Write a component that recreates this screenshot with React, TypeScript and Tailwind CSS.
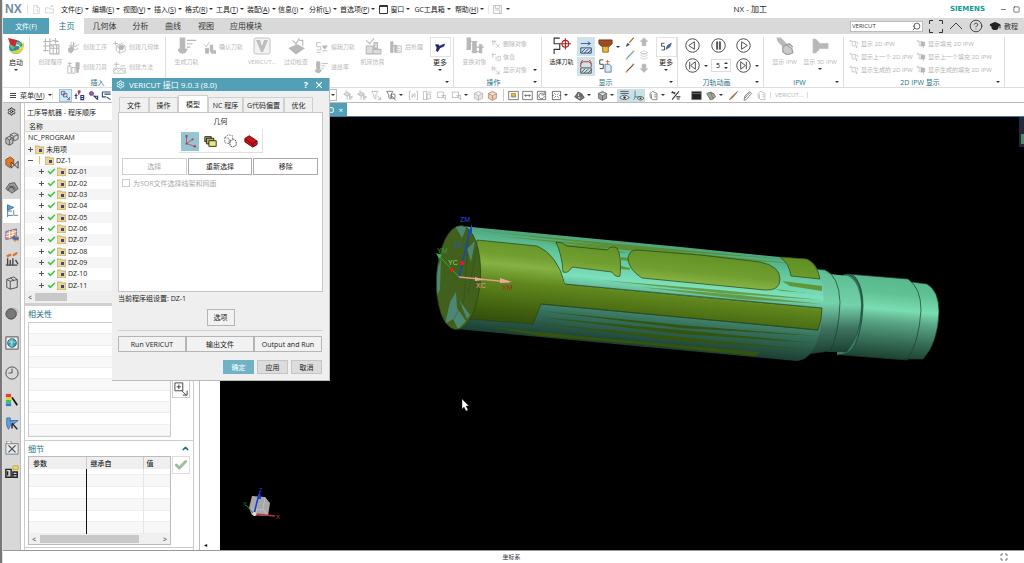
import React from 'react';
import { clsx } from 'clsx';
import { Settings, Search, Maximize, ChevronUp, CircleHelp, GraduationCap, Minus, Square, Check } from 'lucide-react';

type IconName = keyof typeof shapes;

const shapes = {
  grid: (
    <>
      <path d="M1 4h8M1 8h8M1 12h5M3 1v12M7 1v6" />
      <path d="M7 7h8v8H7zM7 10h8M10 7v8M13 7v8M12 1v5M9 3l6 1" />
    </>
  ),
  mill: (
    <>
      <path d="M5 1v8M8 1v8M11 2l-7 7M2 6h8" />
      <path d="M2 9l4-2 3 3-4 5-3-2zM9 7l6-3M10 11l4-2" fill="currentColor" />
    </>
  ),
  tools: (
    <>
      <path d="M1 6h4v9H1zM6 8h4v7H6zM3 1v6M1 3h5" />
      <path d="M11 2h4v8h-4zM12 10h2v4h-2z" fill="currentColor" />
    </>
  ),
  block: (
    <>
      <path d="M4 6l7-3 4 3v6l-7 3-4-3zM4 6l4 3 7-3M8 9v6M3 0v5M0 3h6" />
      <circle cx="10" cy="8" r="3" fill="currentColor" />
    </>
  ),
  method: <path d="M1 9h14v6H1zM1 12l3-2 3 3 3-3 5 4M4 1v7M1 4h7M9 6h6" />,
  drill: (
    <>
      <path d="M2 1h4v9H2zM0 11h8l-2 3H2z" fill="currentColor" />
      <path d="M8 3h8M8 6h5M8 9h3M4 10v5" />
    </>
  ),
  verify: (
    <>
      <path d="M1 4l3 3 4-6" />
      <path d="M3 9h4v6H3zM9 5h3v8H9zM12 12h4v3h-6z" fill="currentColor" />
    </>
  ),
  gouge: (
    <>
      <path d="M2 10l7-3 6 3-7 5z" fill="currentColor" />
      <path d="M5 3l3 3 3-5M8 6v6M11 3h3v5" />
    </>
  ),
  machine: (
    <>
      <path d="M2 3l3 3 4-5" />
      <path d="M2 8h6v7H2zM9 5h3v5H9zM8 11h7v4H8z" fill="#ddd" />
    </>
  ),
  path: (
    <>
      <path d="M7 2H2v5h5v4H2M2 14h5" />
      <path d="M9 6h6l-3 4zM9 12h6" fill="currentColor" />
    </>
  ),
  post: (
    <>
      <path d="M2 1h3v13H2zM7 5h2v9H7z" fill="currentColor" />
      <path d="M10 6h5v8h-5zM11 9h3M11 12h3M4 6h6" />
    </>
  ),
  more: (
    <path d="M2 5h4l1 2 7-3-1 3-5 2-3 5-2-1 1-4z" fill="#25286d" stroke="#25286d" />
  ),
  morePath: (
    <>
      <path d="M6 3H2v4h4v5H2" stroke="#222" />
      <path d="M8 11l2-5 5-3-2 5z" fill="#4364bd" stroke="#3949a0" />
    </>
  ),
  transform: (
    <>
      <path d="M1 1h3v10H1zM6 4h3v10H6zM12 7h2v7h-2z" fill="currentColor" />
      <path d="M3 4h7M7 9h9M5 13h8" />
    </>
  ),
  cut: <path d="M3 1v9M6 2v6M1 4h7M8 8l6 6M14 8l-6 6" />,
  info: <path d="M3 1v9M1 4h7M8 7v7M11 7h4v7h-4z" />,
  show: <path d="M2 2v7M5 3v6M6 7l7 7M13 9v5H8M1 5h8" />,
  select: (
    <>
      <path d="M6 1H1v5h5v5H1v4" stroke="#333" />
      <circle cx="11" cy="6" r="3" stroke="#a22" />
      <path d="M11 1v10M6 6h10" stroke="#a22" />
    </>
  ),
  hatch: (
    <>
      <path d="M2 9h12v6H2zM3 14l4-4M6 15l5-5M10 15l4-4" stroke="#223a70" />
      <path d="M2 4h11M10 2l3 2-3 2" stroke="#264eb1" />
    </>
  ),
  hatchArc: (
    <>
      <path d="M2 9h12v6H2zM3 14l4-4M6 15l5-5M10 15l4-4" stroke="#444" />
      <path d="M2 8V4l3-2h6l3 2v4M4 0L2 4M12 0l2 4" stroke="#b3272c" />
    </>
  ),
  holder: (
    <>
      <path d="M1 1h14v4l-3 3H4L1 5z" fill="#9c4c25" stroke="#713513" />
      <path d="M5 8h6v6H5z" fill="#edb83a" stroke="#8c6a26" />
    </>
  ),
  report: (
    <>
      <path d="M6 1H2v5h4v5H2" stroke="#333" />
      <path d="M8 6h5l2 2v7H8z" fill="#dceaf5" stroke="#557dae" />
      <path d="M9 3h4M11 1v5" stroke="#d35b2a" />
    </>
  ),
  brush: (
    <>
      <path d="M14 1L7 9" stroke="#a2662e" strokeWidth="2" />
      <path d="M2 15l2-5 3 2z" fill="#555" stroke="#444" />
    </>
  ),
  line: (
    <>
      <path d="M3 13L13 3" stroke="#4fa0b5" strokeWidth="2" />
      <path d="M1 14h3M12 2h3" stroke="#e79a2e" strokeWidth="2" />
    </>
  ),
  lineDark: (
    <>
      <path d="M3 13L13 3" stroke="#665544" strokeWidth="2" />
      <path d="M1 14h3M12 2h3" stroke="#e07b2e" strokeWidth="2" />
    </>
  ),
  up: <path d="M8 1l6 6h-3v7H5V7H2z" fill="currentColor" />,
  down: <path d="M8 15l6-6h-3V2H5v7H2z" fill="currentColor" />,
  stack: <path d="M2 4l6-3 6 3-6 3zM2 8l6 3 6-3M2 12l6 3 6-3M3 6h10" />,
  ipw: (
    <>
      <path d="M1 1l3 0 6 6-2 3-6-6z" fill="currentColor" />
      <path d="M6 9l3-2 5 3 1 4-5 2-4-3zM9 7l3-1 3 3" fill="#c9c9c9" stroke="#999" />
    </>
  ),
  ipw3d: <path d="M2 2h2l3 3v6l-3 3H2zM7 6h8v4H7z" fill="currentColor" />,
  flag: <path d="M1 3h3M3 1v4M5 4h5v7H5zM10 5h4v4M12 10v4M10 12l2 2 2-2" />,
  flagFill: (
    <>
      <path d="M1 3h3M3 1v4M5 4h5v7H5zM12 11v4" />
      <path d="M8 5h6v6H8z" fill="currentColor" />
    </>
  ),
  nav: (
    <>
      <path d="M2 2h5v5H2z" fill="#d4d9ee" stroke="#3e4784" />
      <path d="M5 5h5v5H5zM9 9l5 5M14 10v4h-4" stroke="#3e4784" />
    </>
  ),
  navTool: (
    <>
      <path d="M3 5v8M1 8h4M7 2v5M10 8h4v6h-4zM10 11h4" stroke="#29357e" strokeWidth="1.600" />
      <path d="M6 1h3v3H6z" fill="#d33" stroke="#b33" />
    </>
  ),
  navGeo: (
    <>
      <circle cx="5" cy="5" r="3" fill="#8a5acc" stroke="#7d3f3f" />
      <path d="M8 8l6 6M10 9h4v5" stroke="#29357e" strokeWidth="1.600" />
    </>
  ),
  navMethod: <path d="M2 3h12M2 3v7h5M5 6h9M8 10l6 4" stroke="#244b79" strokeWidth="1.600" />,
  cube: <path d="M2 5l6-3 6 3v7l-6 3-6-3zM2 5l6 3 6-3M8 8v7" fill="#9e9e9e" stroke="#555" />,
  cubePale: <path d="M2 5l6-3 6 3v7l-6 3-6-3zM2 5l6 3 6-3M8 8v7" fill="#e6e6e6" />,
  cubeOrange: (
    <path d="M2 5l6-3 6 3v7l-6 3-6-3zM2 5l6 3 6-3M8 8v7" fill="#f2c5a5" stroke="#a0806c" />
  ),
  filter: <path d="M1 2h9l-3 5v6l-3-2V7zM9 8l5 6M14 10v4h-4" />,
  filterDark: (
    <path d="M1 2h9l-3 5v6l-3-2V7zM8 6h5v6H8zM9 9l5 6" stroke="#555" />
  ),
  bracket: <path d="M4 2H2v12h2M12 2h2v12h-2M6 5v6l4-6v6" />,
  boxes: <path d="M2 2h5v12H2zM7 6h5v7H7zM9 3h5" />,
  lasso: <path d="M2 3h9v8H2zM8 8h6v6M9 9l5 5" />,
  snap: <path d="M1 6l5-3 5 3-5 3zM6 9v5M9 8l5 2-4 4zM3 2l3-1" fill="#ddd" />,
  window: (
    <>
      <path d="M1 2h14v12H1zM4 10h8" stroke="#444" />
      <path d="M5 5h6v4H5z" fill="#f3c642" stroke="#86702d" />
    </>
  ),
  fitWidth: <path d="M1 2h14v12H1zM4 8h8M6 6L4 8l2 2M10 6l2 2-2 2" stroke="#444" />,
  rotate: <path d="M2 2h12v12H2zM11 6a4 4 0 1 0 1 3M12 3v4H8" stroke="#444" />,
  fit: <path d="M2 2h12v12H2zM5 5l2 2M11 5L9 7M5 11l2-2M11 11L9 9M2 8h2M12 8h2" stroke="#333" />,
  shade: (
    <path d="M1 10l5-7 5 2 4 6-6 4zM6 3l-1 7 4 5M5 10l6-2" fill="#777" stroke="#444" />
  ),
  eye: (
    <>
      <path d="M2 2h12M2 5h12" stroke="#222" />
      <path d="M1 11q7-7 14 0-7 6-14 0" fill="#fff" stroke="#222" />
      <circle cx="8" cy="11" r="2" fill="#222" />
    </>
  ),
  csysEye: (
    <>
      <path d="M3 1v9h9M3 10l-2 4" stroke="#295a7c" />
      <path d="M6 12q5-5 10 0-5 5-10 0" fill="#fff" stroke="#222" />
      <circle cx="11" cy="12" r="1.500" fill="#222" />
    </>
  ),
  bag: <path d="M3 5l4-3 6 3v9H7l-4-3zM5 6v6M9 7h3M9 10h3" stroke="#555" />,
  bagPale: <path d="M3 5l4-3 6 3v9H7l-4-3zM5 6v6M9 7h3M9 10h3" />,
  percent: <path d="M13 2L3 14M2 4h6M3 2l4 4M9 10h6M10 13h4" stroke="#333" strokeWidth="1.600" />,
  film: <path d="M1 2h14v12H1zM2 5h12" fill="#222" stroke="#888" />,
  part: (
    <>
      <path d="M1 5l6-2 5 3-1 7-5 1z" fill="#8caf8c" stroke="#555" />
      <path d="M7 4l5 2 2 4-4 2z" fill="#d88f90" stroke="#766" />
    </>
  ),
  pen: <path d="M14 2L6 9l-4 5 5-3z" fill="#bb8b48" stroke="#775b36" />,
  clip: <path d="M4 12l8-9 2 2-8 9-3 1 1-6 7-7" stroke="#555" />,
  gearPart: (
    <>
      <path d="M1 10l4-6 6-1 4 7-7 5z" fill="#999" stroke="#555" />
      <path d="M3 12q4-8 9-2M5 7q5 1 6 5" stroke="#444" />
    </>
  ),
  assembly: (
    <>
      <path d="M6 3l5-2 4 2v5l-4 2-5-2zM6 3l4 2 5-2M10 5v5" fill="#d5d5d5" stroke="#555" />
      <path d="M1 7l4-2 4 2v6l-4 2-4-2zM1 7l4 2 4-2M5 9v6" fill="#bdbdbd" stroke="#555" />
    </>
  ),
  constraint: (
    <>
      <path d="M1 4l5-3 4 3v6l-5 3-4-3z" fill="#e0792a" stroke="#874b25" />
      <path d="M7 7l8 7V6l-8 8z" fill="#ccc" stroke="#333" />
    </>
  ),
  opNav: (
    <>
      <path d="M3 1v14M3 8h5M3 13h6M3 4h5" stroke="#3b70a8" />
      <path d="M3 1l7 3-7 3z" fill="#63a3d8" stroke="#346da6" />
      <path d="M10 7v6h5" stroke="#777" />
    </>
  ),
  mtool: (
    <>
      <path d="M1 4l12-3v10L1 13z" fill="#d8a083" stroke="#7e5d83" />
      <path d="M1 7l12-3M1 10l12-3M5 3v9M9 2v9" stroke="#fff" />
      <path d="M7 11l5-4v3h4v4h-4v2z" fill="#3e68c3" stroke="#f1a531" />
    </>
  ),
  robots: (
    <>
      <path d="M1 15h13M3 7v8M6 9v6M9 7v8M12 9l3 5" stroke="#444" strokeWidth="1.600" />
      <path d="M2 5l5-2M9 4l5-3" stroke="#df6e32" strokeWidth="2.500" />
    </>
  ),
  books: <path d="M2 4l4 2v9l-4-2zM6 6l8-2v9l-8 2M2 4l8-3 4 3M6 2l4 3" stroke="#444" />,
  sphere: (
    <>
      <circle cx="7" cy="9" r="6" fill="#777" stroke="#444" />
      <path d="M10 2q4 1 5 6" stroke="#aaa" />
    </>
  ),
  globe: (
    <>
      <path d="M1 1h14v14H1z" fill="#eee" stroke="#444" />
      <circle cx="8" cy="8" r="5" fill="#399eb0" stroke="#29667d" />
      <path d="M4 7h8M8 3v10M5 4q5 4 0 8" stroke="#b4e1df" />
    </>
  ),
  clock: (
    <>
      <circle cx="8" cy="8" r="7" stroke="#444" />
      <path d="M8 3v5H4" stroke="#444" />
    </>
  ),
  palette: (
    <>
      <path d="M1 1h6v4H1z" fill="#e64135" stroke="none" />
      <path d="M1 5h6v3H1z" fill="#e8d536" stroke="none" />
      <path d="M1 8h6v4H1z" fill="#36c853" stroke="none" />
      <path d="M1 12h6v3H1z" fill="#3b73d2" stroke="none" />
      <path d="M8 5l6 9" stroke="#111" strokeWidth="2" />
    </>
  ),
  blueTool: (
    <>
      <path d="M2 1h4v9l-2 4-2-4zM6 4h9l-5 4z" fill="#6b9edb" stroke="#3570b9" />
      <path d="M8 7l6 7M8 7v6" stroke="#222" strokeWidth="1.600" />
    </>
  ),
  wrench: (
    <>
      <path d="M1 3h14v12H1z" fill="#e9e9e9" stroke="#777" />
      <path d="M4 5l8 8M12 5l-8 8" stroke="#456" strokeWidth="1.600" />
      <path d="M2 0h5v3H2z" fill="#fff" stroke="#888" />
    </>
  ),
  reuse: (
    <>
      <path d="M1 5h6v9H1zM9 8h5v6H9zM9 11h5M3 7v5" stroke="#222" strokeWidth="1.600" />
      <path d="M9 1h6v4H9z" fill="#f0dd5d" stroke="#b9a440" />
    </>
  ),
  csys: (
    <>
      <path d="M4 2v9l9 3M4 11l7-5" stroke="#b6525a" />
      <path d="M3 1h2v3H3zM10 5h2v2h-2zM12 13h3v2h-3zM3 10h2v2H3z" fill="#c52b31" stroke="none" />
    </>
  ),
  cards: (
    <>
      <path d="M1 2h8v6H1z" fill="#b5b35c" stroke="#111" />
      <path d="M3 4h9v7H3z" fill="#b5b35c" stroke="#111" />
      <path d="M6 7h9v7H6z" fill="#ece97c" stroke="#111" />
    </>
  ),
  blank: (
    <>
      <path d="M2 4l4-3 5 1v5l-4 4-5-1zM2 4l5 1v6" stroke="#777" strokeDasharray="2 1" />
      <path d="M8 8l4-2 3 2v5l-4 2-3-2z" fill="#fff" stroke="#333" strokeDasharray="2 1" />
    </>
  ),
  redPart: (
    <>
      <path d="M1 5l5-3 9 6v4l-5 3-9-6z" fill="#c9141c" stroke="#600" />
      <path d="M2 6l8 6M10 11l5-3M10 11v3" stroke="#5d090c" />
    </>
  ),
  sheet: <path d="M3 1h6l4 4v10H3zM9 1v4h4M6 9h4v4" />,
  open: <path d="M1 5h5l2 2h7v7H1zM8 4l6-3M11 1h3v3" />,
  save: <path d="M1 1h14v14H1zM4 1v5h8V1M4 9h8v6" />,
} satisfies Record<string, React.ReactNode>;

const Icon = ({ name, className = 'size-3' }: { name: IconName; className?: string }) => (
  <svg
    viewBox="0 0 16 16"
    fill="none"
    stroke="currentColor"
    strokeWidth="1"
    className={clsx('shrink-0', className)}
    aria-hidden="true"
  >
    {shapes[name]}
  </svg>
);

const Caret = ({ className }: { className?: string }) => (
  <svg viewBox="0 0 4 2" className={clsx('h-[2px] w-1 shrink-0', className)} aria-hidden="true">
    <path d="M0 0h4L2 2z" fill="#333" />
  </svg>
);

const menus = ['文件(F)', '编辑(E)', '视图(V)', '插入(S)', '格式(R)', '工具(T)', '装配(A)', '信息(I)', '分析(L)'];

const MenuText = ({ label }: { label: string }) => {
  const m = label.match(/^(.*)\((.)\)$/);
  if (!m) return <>{label}</>;
  return (
    <>
      {m[1]}(<u>{m[2]}</u>)
    </>
  );
};

function MenuBar() {
  return (
    <header className="flex h-[18px] items-center bg-white text-[7px] text-[#222]">
      <div className="w-6 pl-[2px] font-['Liberation_Sans'] text-[12px] font-bold text-[#6d8ba6]">NX</div>
      <div className="flex w-[34px] items-center gap-1 border-l border-[#e0e0e0] pl-1 text-[#bbb]">
        <Icon name="sheet" className="size-[9px]" />
        <Icon name="open" className="size-[9px]" />
      </div>
      {menus.map((m) => (
        <button key={m} className="flex w-[31px] items-center gap-[2px] whitespace-nowrap">
          <span><MenuText label={m} /></span>
          <Caret />
        </button>
      ))}
      <div className="flex items-center gap-1 whitespace-nowrap">
        <button className="flex items-center gap-[2px]">
          <span><MenuText label="首选项(P)" /></span>
          <Caret />
        </button>
        <button className="flex items-center gap-[2px]">
          <svg viewBox="0 0 9 9" className="size-[9px]" fill="none" stroke="#333" aria-hidden="true">
            <path d="M.5 .5h8v8h-8zM1 1.500h7" />
          </svg>
          窗口
          <Caret />
        </button>
        <button className="flex items-center gap-[2px]">
          GC工具箱
          <Caret />
        </button>
        <button className="flex items-center gap-[2px]">
          <span><MenuText label="帮助(H)" /></span>
          <Caret />
        </button>
        <button className="flex items-center gap-1 border-l border-[#e8e8e8] pl-1 text-[#999]" aria-label="保存">
          <Icon name="save" className="size-[9px]" />
          <Caret />
        </button>
      </div>
      <div className="flex-1" />
      <h1 className="mr-[183px] text-[8px]">NX - 加工</h1>
      <strong className="mr-[15px] font-['DejaVu_Sans'] text-[7px] font-bold text-[#0b9c98]">SIEMENS</strong>
      <Minus size={7} className="mr-1.5" />
      <Square size={7} className="mr-1" />
    </header>
  );
}

function TabBar() {
  return (
    <nav className="flex h-4 shrink-0 items-center bg-[#d9d9d9] text-[8px] text-[#333]">
      <button className="h-full w-[46px] bg-[#529fb6] text-[7px] text-white">文件(F)</button>
      <button className="h-full w-[35px] bg-white text-[#17748d]">主页</button>
      <button className="w-[41px]">几何体</button>
      <button className="w-[31px]">分析</button>
      <button className="w-[34px]">曲线</button>
      <button className="w-[32px]">视图</button>
      <button className="w-12">应用模块</button>
      <div className="flex-1" />
      <label className="mr-1.5 flex h-[11px] w-[73px] items-center border border-[#bbb] bg-white px-px">
        <input aria-label="命令查找" defaultValue="VERICUT" className="w-0 flex-1 text-[6px] leading-none outline-none" />
        <Search size={9} className="-scale-x-100" strokeWidth={2} />
      </label>
      <svg viewBox="0 0 14 13" className="mr-1.5 h-[13px] w-[14px]" fill="none" stroke="#333" aria-hidden="true">
        <path d="M.5 4V.5H4M10 .5h3.500V4M13.500 9v3.500H10M4 12.500H.5V9" />
      </svg>
      <svg viewBox="0 0 14 8" className="mr-1.5 h-2 w-[14px]" fill="none" stroke="#444" aria-hidden="true">
        <path d="M1 7l6-6 6 6" />
      </svg>
      <CircleHelp size={14} strokeWidth={1.5} className="mr-1.5" />
      <button className="flex items-center gap-[3px] pr-1.5 text-[7px]">
        <GraduationCap size={12} fill="#222" className="text-[#222]" />教程
      </button>
    </nav>
  );
}

const Group = ({ label, className, children, corner = true }: {
  label?: string;
  className: string;
  children: React.ReactNode;
  corner?: boolean;
}) => (
  <section className={clsx('flex shrink-0 flex-col border-r border-[#dedede]', className)}>
    <div className="flex flex-1 items-start">{children}</div>
    <div className="flex h-[10px] items-center justify-center text-[7px] text-[#1b6f87]">
      <span className="flex-1 text-center">{label}</span>
      {corner && <Caret className="mr-1" />}
    </div>
  </section>
);

const Big = ({ icon, label, className, caret, live }: {
  icon: IconName;
  label: string;
  className: string;
  caret?: boolean;
  live?: boolean;
}) => (
  <button className={clsx('flex shrink-0 flex-col items-center whitespace-nowrap text-[6px]', live ? 'text-[#222]' : 'text-[#b8b8b8]', className)}>
    <Icon name={icon} className="size-[18px]" />
    <span className="mt-1 h-[9px]">{label}</span>
    {caret && <Caret />}
  </button>
);

const Small = ({ icon, label, caret }: { icon: IconName; label: string; caret?: boolean }) => (
  <button className="flex h-[13px] items-center gap-[2px] whitespace-nowrap text-[6px] text-[#b4b4b4]">
    <Icon name={icon} className="size-[10px]" />
    {label}
    {caret && <Caret className="ml-1" />}
  </button>
);

const Mid = ({ icon, label }: { icon: IconName; label: string }) => (
  <button className="flex h-5 items-center gap-[3px] whitespace-nowrap text-[6px] text-[#b8b8b8]">
    <Icon name={icon} className="size-[13px]" />
    {label}
  </button>
);

const More = ({ icon }: { icon: IconName }) => (
  <button className="flex w-[22px] flex-col items-center text-[7px] text-[#222]">
    <span className="flex h-5 w-[21px] items-center justify-center border border-[#e2e2e2]">
      <Icon name={icon} className="size-3" />
    </span>
    <span className="mt-[2px] h-[10px]">更多</span>
    <Caret />
  </button>
);

const Play = ({ label, d }: { label: string; d: string }) => (
  <button aria-label={label}>
    <svg viewBox="0 0 16 16" className="size-[15px]" fill="none" stroke="#444" strokeWidth="1">
      <circle cx="8" cy="8" r="7.2" />
      <path d={d} />
    </svg>
  </button>
);

function Ribbon() {
  return (
    <div className="flex h-[54px] shrink-0 overflow-hidden border-b border-[#ddd] bg-white pt-[3px] leading-none">
      <button className="flex w-[27px] shrink-0 flex-col items-center border-r border-[#dedede] text-[7px] text-[#222]">
        <svg viewBox="0 0 18 18" className="size-[18px]" aria-hidden="true">
          <circle cx="9" cy="10" r="7" fill="#238eaf" />
          <path d="M2 9q5-6 14-3l-4 3q-5 0-6 4z" fill="#5fc078" />
          <path d="M3 14Q13 15 17 5q1 11-9 12z" fill="#f0cd37" />
          <path d="M1 1l9 2-2 7-5-3z" fill="#ce2634" />
          <path d="M9 8q5 0 4 4" stroke="#fff" fill="none" />
        </svg>
        <span className="mt-1 h-[10px]">启动</span>
        <Caret />
      </button>
      <Group label="插入" className="w-[136px]" corner={false}>
        <Big icon="grid" label="创建程序" className="w-[37px] pl-1" />
        <div className="w-[46px]">
          <Mid icon="mill" label="创建工序" />
          <Mid icon="tools" label="创建刀具" />
        </div>
        <div>
          <Mid icon="block" label="创建几何体" />
          <Mid icon="method" label="创建方法" />
        </div>
      </Group>
      <Group className="w-[288px]">
        <Big icon="drill" label="生成刀轨" className="w-[37px] pl-1" />
        <div className="w-[41px]">
          <Mid icon="verify" label="确认刀轨" />
        </div>
        <button className="flex w-[36px] flex-col items-center text-[6px] text-[#b8b8b8]">
          <svg viewBox="0 0 18 18" className="size-[18px]" aria-hidden="true">
            <rect x="1" y="1" width="16" height="16" rx="2" fill="#f2f2f2" stroke="#c4c4c4" />
            <path d="M3 3h4l2 6 2-6h4l-5 12H8z" fill="#bdbdbd" />
          </svg>
          <span className="mt-1">VERICUT...</span>
        </button>
        <Big icon="gouge" label="过切检查" className="w-[32px]" />
        <div className="w-[44px] pl-[3px]">
          <Mid icon="path" label="编辑刀轨" />
          <Mid icon="drill" label="进给率" />
        </div>
        <Big icon="machine" label="机床仿真" className="w-[33px]" />
        <div className="w-[40px]">
          <Mid icon="post" label="后处理" />
        </div>
        <More icon="more" />
      </Group>
      <Group label="操作" className="w-[88px]">
        <Big icon="transform" label="变换对象" className="w-[37px] pl-1" />
        <div>
          <Small icon="cut" label="删除对象" />
          <Small icon="info" label="信息" />
          <Small icon="show" label="显示对象" caret />
        </div>
      </Group>
      <Group label="显示" className="w-[136px]">
        <Big icon="select" label="选择刀轨" className="w-[35px] pl-1" live />
        <div className="flex w-[18px] flex-col gap-px">
          <button aria-label="刀轨截面" className="flex h-[19px] items-center justify-center bg-[#cfe3e9]">
            <Icon name="hatch" className="size-[14px]" />
          </button>
          <button aria-label="刀轨边界" className="flex h-[19px] items-center justify-center bg-[#cfe3e9]">
            <Icon name="hatchArc" className="size-[14px]" />
          </button>
        </div>
        <div className="flex w-[30px] flex-col gap-[5px] pt-[2px] pl-[3px]">
          <span className="flex items-center gap-[3px]">
            <Icon name="holder" className="size-[15px]" />
            <Caret />
          </span>
          <Icon name="report" className="size-[14px]" />
        </div>
        <div className="flex w-[14px] flex-col gap-[3px]">
          <Icon name="brush" className="size-[10px]" />
          <Icon name="line" className="size-[10px]" />
          <Icon name="lineDark" className="size-[10px]" />
        </div>
        <div className="flex w-4 flex-col gap-[3px] text-[#b8b8b8]">
          <Icon name="up" className="size-[10px]" />
          <Icon name="stack" className="size-[10px]" />
          <Icon name="down" className="size-[10px]" />
        </div>
        <More icon="morePath" />
      </Group>
      <Group label="刀轨动画" className="w-[86px]">
        <div className="grid grid-cols-[26px_25px_26px] gap-y-[5px] pt-px pl-[7px]">
          <Play label="倒放" d="M10 4v8L4 8z" />
          <Play label="暂停" d="M6 4v8h1V4zM9 4v8h1V4z" />
          <Play label="播放" d="M6 4v8l6-4z" />
          <span className="flex items-center gap-1">
            <Play label="上一步" d="M11 4v8L6 8zM5 4v8" />
            <Caret />
          </span>
          <label className="flex h-[13px] w-5 items-center self-center border border-[#ddd] pl-1 text-[7px]">
            <input aria-label="速度" defaultValue="5" className="w-2 outline-none" />
            <span className="flex flex-col gap-[3px]">
              <Caret className="rotate-180" />
              <Caret />
            </span>
          </label>
          <span className="flex items-center gap-1">
            <Play label="下一步" d="M5 4v8l5-4zM11 4v8" />
            <Caret />
          </span>
        </div>
      </Group>
      <Group label="IPW" className="w-[80px]">
        <Big icon="ipw" label="显示 IPW" className="w-[37px] pl-1" />
        <Big icon="ipw3d" label="显示 3D IPW" className="w-[38px]" caret />
      </Group>
      <Group label="2D IPW 显示" className="w-[161px]">
        <div className="w-[72px] pl-[5px]">
          <Small icon="flag" label="显示 2D IPW" />
          <Small icon="flag" label="显示上一个 2D IPW" />
          <Small icon="flag" label="显示生成的 2D IPW" />
        </div>
        <div>
          <Small icon="flagFill" label="显示填充 2D IPW" />
          <Small icon="flagFill" label="显示上一个填充 2D IPW" />
          <Small icon="flagFill" label="显示生成的填充 2D IPW" />
        </div>
      </Group>
    </div>
  );
}

type Tool = { icon: IconName; caret?: boolean; on?: boolean };

const selectTools: Tool[] = [
  { icon: 'snap' }, { icon: 'snap' }, { icon: 'filter' }, { icon: 'filterDark', caret: true },
  { icon: 'bracket' }, { icon: 'boxes' }, { icon: 'lasso' }, { icon: 'lasso', caret: true },
  { icon: 'cubePale' }, { icon: 'cubeOrange' },
];

const viewTools: Tool[] = [
  { icon: 'window' }, { icon: 'fitWidth' }, { icon: 'rotate' }, { icon: 'fit', caret: true },
  { icon: 'shade', caret: true }, { icon: 'cube', caret: true }, { icon: 'eye', on: true },
  { icon: 'csysEye', on: true }, { icon: 'bag', caret: true }, { icon: 'percent' },
];

const ToolSet = ({ tools }: { tools: Tool[] }) => (
  <>
    {tools.map((t, i) => (
      <button
        key={i}
        aria-label={t.icon}
        className={clsx('flex h-[13px] shrink-0 items-center justify-center gap-[2px] text-[#aaa]', t.caret ? 'w-[23px]' : 'w-[14px]', t.on && 'bg-[#c9e0e6]')}
      >
        <Icon name={t.icon} className="size-[11px]" />
        {t.caret && <Caret />}
      </button>
    ))}
  </>
);

function ToolStrip() {
  return (
    <div className="flex h-[15px] shrink-0 items-center border-b border-[#bbb] bg-white text-[7px] text-[#333]">
      <button className="flex w-[50px] items-center gap-1 whitespace-nowrap border-r border-[#ddd] pl-[7px]">
        <svg viewBox="0 0 6 5" className="h-[5px] w-1.5 shrink-0" fill="#444">
          <path d="M0 0h6v1H0zM0 2h6v1H0zM0 4h6v1H0z" />
        </svg>
        <span className="flex-1 text-left"><MenuText label="菜单(M)" /></span>
        <Caret className="mr-1" />
      </button>
      <div className="flex w-[284px] items-center gap-px pl-[6px]">
        <span className="flex h-[13px] w-[13px] items-center border border-[#9fc4da] bg-[#d6eaf3]">
          <Icon name="nav" className="size-[11px]" />
        </span>
        <Icon name="navTool" className="mx-px size-[11px]" />
        <Icon name="navGeo" className="mx-px size-[11px]" />
        <Icon name="navMethod" className="size-[11px]" />
        <select aria-label="选择范围" className="ml-auto h-3 w-20 appearance-none border border-[#bbb] bg-white" />
      </div>
      <Caret className="-ml-1.5" />
      <div className="w-1.5" />
      <ToolSet tools={selectTools} />
      <div className="ml-1 h-3 w-[3px] border-l border-[#ccc]" />
      <ToolSet tools={viewTools} />
      <div className="w-[7px]" />
      <ToolSet tools={[{ icon: 'film' }, { icon: 'part', caret: true }, { icon: 'pen' }, { icon: 'clip' }, { icon: 'bagPale' }]} />
      <span className="ml-[2px] border-x border-[#ddd] px-1 text-[6px] text-[#b4b4b4]">VERICUT...</span>
    </div>
  );
}

const sideIcons: IconName[] = ['assembly', 'constraint', 'gearPart', 'opNav', 'mtool', 'robots', 'books'];
const lowerIcons: IconName[] = ['sphere', 'globe', 'clock'];
const lastIcons: IconName[] = ['palette', 'blueTool', 'wrench', 'reuse'];

function SideBar() {
  return (
    <aside className="flex w-[18px] shrink-0 flex-col items-center border-r border-[#bbb] bg-[#d8d8d8]">
      <button aria-label="设置" className="flex h-6 items-start pt-1">
        <Settings size={9} />
      </button>
      {sideIcons.map((n) => (
        <button key={n} aria-label={n} className={clsx('flex h-6 w-full items-center justify-center', n === 'opNav' && 'bg-white')}>
          <Icon name={n} className="size-[14px]" />
        </button>
      ))}
      <div className="h-[3px]" />
      {lowerIcons.map((n) => (
        <button key={n} aria-label={n} className="flex h-[30px] w-full items-center justify-center">
          <Icon name={n} className="size-[14px]" />
        </button>
      ))}
      {lastIcons.map((n) => (
        <button key={n} aria-label={n} className="flex h-6 w-full items-center justify-center">
          <Icon name={n} className="size-[14px]" />
        </button>
      ))}
    </aside>
  );
}

const Folder = () => (
  <svg viewBox="0 0 9 9" className="size-[9px] shrink-0" aria-hidden="true">
    <path d="M0 1h4l1 1h4v7H0z" fill="#ead793" stroke="#a68e4a" strokeWidth=".6" />
    <path d="M4 4h3v3H4z" fill="#4b3f86" />
  </svg>
);

const Expand = ({ open }: { open?: boolean }) => (
  <svg viewBox="0 0 5 5" className="size-[5px] shrink-0" stroke="#555" aria-hidden="true">
    <path d={open ? 'M0 2.5h5' : 'M0 2.5h5M2.5 0v5'} />
  </svg>
);

const programs = ['01', '02', '03', '04', '05', '06', '07', '08', '09', '10', '11'];

function ProgramTree() {
  return (
    <ul className="flex h-[159px] flex-col text-[7px] [&>li]:flex [&>li]:flex-1 [&>li]:items-center [&>li:nth-child(even)]:bg-[#f5f5f5]">
      <li className="pl-[3px]">NC_PROGRAM</li>
      <li className="gap-[2px] pl-[3px]">
        <Expand />
        <Folder />
        未用项
      </li>
      <li className="gap-[2px] pl-[3px]">
        <Expand open />
        <i className="ml-1 h-2 w-px bg-[#e0c250]" />
        <span className="w-px" />
        <Folder />
        DZ-1
      </li>
      {programs.map((p) => (
        <li key={p} className="gap-px pl-[14px]">
          <Expand />
          <Check size={9} strokeWidth={4} className="ml-[2px] text-[#35c845]" />
          <Folder />
          <span className="pl-px">DZ-{p}</span>
        </li>
      ))}
    </ul>
  );
}

function Navigator() {
  return (
    <div className="flex w-[178px] shrink-0 bg-white pr-[5px] pl-[3px] text-[7px] text-[#222]">
      <div className="flex flex-1 flex-col border-x border-[#ccc]">
        <h2 className="h-[17px] pt-[6px] pl-[2px]">工序导航器 - 程序顺序</h2>
        <div className="h-3 border-b border-[#ddd] bg-[#efefef] pt-[3px] pl-1">名称</div>
        <ProgramTree />
        <div className="flex h-3 items-center bg-[#f0f0f0] pl-[3px]">
          <span className="w-[7px]">&lt;</span>
          <div className="h-2 w-8 bg-[#c8c8c8]" />
        </div>
        <div className="h-[3px] bg-[#d0d0d0]" />
        <h3 className="h-4 pt-1 pl-[3px] text-[8px] text-[#1b6f87]">相关性</h3>
        <div className="flex h-[115px]">
          <div className="ml-[3px] flex w-[143px] flex-col border border-[#ccc]">
            {Array.from({ length: 10 }, (_, i) => (
              <div key={i} className="flex-1 border-b border-[#eee] odd:bg-white even:bg-[#f8f8f8]" />
            ))}
          </div>
          <button aria-label="展开" className="mt-[58px] ml-px flex size-[18px] items-center justify-center border border-[#ccc]">
            <svg viewBox="0 0 16 16" className="size-[14px]" fill="none" stroke="#444" strokeWidth="1.1">
              <path d="M1 1h9v9H1zM5.500 3v5M3 5.500h5M9 10l5 5M15 10v5h-5" />
            </svg>
          </button>
        </div>
        <div className="mt-[3px] flex h-4 items-center justify-between border-t border-[#ccc] px-[3px] text-[8px] text-[#1b6f87]">
          <h3>细节</h3>
          <ChevronUp size={9} strokeWidth={4} />
        </div>
        <div className="flex">
          <div className="ml-[3px] h-[89px] w-[143px] border border-[#bbb]">
            <table className="h-[77px] w-full table-fixed border-collapse text-left">
              <thead>
                <tr className="h-3 bg-[#efefef]">
                  <th className="w-[57px] border-r border-[#ccc] p-0 pl-1 font-medium">参数</th>
                  <th className="w-[57px] border-r border-[#ccc] p-0 pl-1 font-medium">继承自</th>
                  <th className="p-0 pl-[3px] font-medium">值</th>
                </tr>
              </thead>
              <tbody>
                {[0, 1, 2, 3, 4, 5].map((r) => (
                  <tr key={r} className="border-b border-[#eee] even:bg-[#f7f7f7]">
                    <td className="border-r border-r-[#111] p-0" />
                    <td className="border-r border-r-[#e5e5e5] p-0" />
                    <td className="p-0" />
                  </tr>
                ))}
              </tbody>
            </table>
            <div className="flex h-[10px] items-center bg-[#f0f0f0] px-[3px]">
              <span className="w-2">&lt;</span>
              <div className="h-2 w-[99px] bg-[#c8c8c8]" />
              <span className="ml-auto">&gt;</span>
            </div>
          </div>
          <button aria-label="应用参数" className="ml-px flex size-[18px] items-center justify-center border border-[#ddd]">
            <Check size={14} strokeWidth={5} className="text-[#9cbc9d]" />
          </button>
        </div>
        <div className="mt-[2px] border-t border-[#ccc]" />
      </div>
    </div>
  );
}

const streaks = [
  'M481 231L640 246 780 259 640 249z',
  'M500 236L660 250 800 264 660 254z',
  'M548 243L600 247 628 253 590 250z',
  'M570 280L640 283 822 300 700 292z',
  'M590 284L700 290 822 303 700 295z',
  'M621 257L629 258 628 261 621 260z',
  'M621 266L630 268 630 270 621 269z',
  'M782 281L822 286 822 291 790 286z',
  'M775 289L822 295 822 299 790 294z',
];

const darkStreaks = [
  'M541 311L680 325 818 336 680 328z',
  'M538 317L680 330 816 343 680 334z',
  'M536 323L680 337 812 350 680 341z',
  'M490 327L600 338 760 352 755 356 640 344 540 336z',
];

function Model() {
  return (
    <svg viewBox="220 117 804 433" preserveAspectRatio="xMidYMid slice" className="h-full w-full" aria-label="零件模型">
      <defs>
        <linearGradient id="teal" gradientUnits="userSpaceOnUse" x1="645" y1="242" x2="635" y2="347">
          <stop offset="0" stopColor="#4aa17b" />
          <stop offset=".18" stopColor="#62c79c" />
          <stop offset=".38" stopColor="#7be0bb" />
          <stop offset=".52" stopColor="#5aa885" />
          <stop offset=".75" stopColor="#35705c" />
          <stop offset="1" stopColor="#1b3c30" />
        </linearGradient>
        <linearGradient id="olive" gradientUnits="userSpaceOnUse" x1="645" y1="242" x2="635" y2="347">
          <stop offset="0" stopColor="#5d8f20" />
          <stop offset=".24" stopColor="#719e30" />
          <stop offset=".34" stopColor="#86b244" />
          <stop offset=".5" stopColor="#5f871d" />
          <stop offset=".78" stopColor="#3f5d0e" />
          <stop offset="1" stopColor="#25400c" />
        </linearGradient>
        <linearGradient id="shaft" gradientUnits="userSpaceOnUse" x1="890" y1="277" x2="883" y2="358">
          <stop offset="0" stopColor="#57b78b" />
          <stop offset=".2" stopColor="#60c294" />
          <stop offset=".4" stopColor="#7addb2" />
          <stop offset=".55" stopColor="#59a685" />
          <stop offset=".8" stopColor="#356b56" />
          <stop offset="1" stopColor="#1d4232" />
        </linearGradient>
        <linearGradient id="neck" x1="0" y1="0" x2="0" y2="1">
          <stop offset="0" stopColor="#5cbc91" />
          <stop offset=".4" stopColor="#74d2ab" />
          <stop offset=".7" stopColor="#3d735f" />
          <stop offset="1" stopColor="#1c4031" />
        </linearGradient>
        <clipPath id="face">
          <ellipse cx="458.500" cy="277.500" rx="22" ry="52" transform="rotate(3 458.500 277.500)" />
        </clipPath>
      </defs>
      <rect x="220" y="117" width="804" height="433" fill="#000" />

      <g stroke="#1d392e" strokeWidth=".7">
        <path d="M912 282l15 2q12 7 12 28 -1 31-16 47l-16 0z" fill="url(#shaft)" />
        <path d="M847 274l61 5q13 9 13 31 -2 33-14 50l-64-5z" fill="url(#shaft)" />
        <path d="M843 275q8-3 13 3 7 10 7 28 -1 24-8 39-5 10-18 10" fill="#3c7861" />
        <path d="M830 274l18 2q12 6 13 29-1 30-14 47l-20 0z" fill="url(#neck)" stroke="none" />
        <path d="M815 269l10 1q14 6 15 32-1 32-10 49l-22 3z" fill="url(#neck)" />
        <path d="M847 274q15 4 15 33-1 31-19 48" fill="none" stroke="#1b4b3b" />
      </g>

      <path d="M461 226l220 21 99 10 27 2q12 5 16 28 2 36-7 57-7 16-19 17L700 352l-244-23z" fill="url(#teal)" />
      <g fill="#5e881c" opacity=".8">
        {streaks.map((d) => <path key={d} d={d} />)}
      </g>
      <g fill="#33530f">
        {darkStreaks.map((d) => <path key={d} d={d} />)}
      </g>
      <g fill="url(#olive)" stroke="#273f17" strokeWidth=".7">
        <path d="M477 240l60 6q20 8 28 38l135 13 122 11q0 12-4 22L700 319l-159-15-8 20-63-5z" />
      </g>
      {/* teal gap between the pocket and the lower band */}
      <path d="M562 272l10-5 41 5 10 5 19 1 60 6 68 6 52 4v14l-122-11-135-13z" fill="url(#teal)" />
      <g fill="#5e881c" opacity=".7">
        <path d="M600 280L720 290 822 300 720 293zM640 287L740 295 822 304 740 299z" />
      </g>
      <g fill="url(#olive)" stroke="#273f17" strokeWidth=".7">
        <path d="M556 242q7 0 11 4l40 4q4-5 10-2 5 9 3 28-4 2-8-4l-40-5q-4 7-9 5-1-17-7-30z" />
        <path d="M637 250l63 5 60 7q20 4 20 17 0 12-15 11l-123-12q-14-9-14-20 1-8 9-8z" />
        <path d="M780 257l27 2q10 5 13 20l-29-3q-2-13-11-19z" />
      </g>
      <path d="M541 304L818 330M565 284L822 308" stroke="#26482f" strokeWidth=".7" />

      <g clipPath="url(#face)">
        <rect x="430" y="220" width="60" height="115" fill="#40601b" />
        <path d="M455 226h12l-5 12zM467 249l8-8-4 21zM437 270l4-11-1 30-4 10zM450 302l6-10 1 16 9 13-8 8-5-10-8 5zM459 300l8 19 3-4z" fill="#4d8774" />
      </g>
      <ellipse cx="458.500" cy="277.500" rx="22" ry="52" transform="rotate(3 458.500 277.500)" fill="none" stroke="#294116" strokeWidth=".7" />
      <path d="M469 230l-5 70-13 25M477 247l-9 47" stroke="#294116" strokeWidth=".5" strokeDasharray="2 1" fill="none" />

      <path d="M459 277L470 230" stroke="#1846ba" strokeWidth="1.600" />
      <path d="M472 224l-4 9 4 1z" fill="#1745cc" />
      <path d="M459 277L440 257" stroke="#32a743" />
      <path d="M436 253l6 2-3 4z" fill="#35b34c" />
      <path d="M459 277L509 282" stroke="#e29a8a" strokeWidth="1.600" />
      <path d="M512 282l-12-4v5zM484 280l-9-3v4z" fill="#eaaa9a" />
      <rect x="460" y="261" width="4" height="4" fill="#d42020" />
      <rect x="450" y="268" width="3" height="4" fill="#d42020" />
      <g fontSize="7" fontFamily="Liberation Sans">
        <text x="460" y="222" fill="#2855ea">ZM</text>
        <text x="454" y="247" fill="#2855d0">ZC</text>
        <text x="437" y="253" fill="#36944a">YM</text>
        <text x="448" y="265" fill="#9bd371">YC</text>
        <text x="476" y="288" fill="#eda087">XC</text>
        <text x="502" y="290" fill="#a62a20">XM</text>
      </g>

      <path d="M252 496l13 1 5 6-2 13-16-1-3-7z" fill="#a8a8a8" />
      <path d="M265 497l-2 12 5 7M251 509l12 1M258 496l-2 18" stroke="#c7c7c7" strokeWidth=".7" fill="none" />
      <path d="M254 514l5-20" stroke="#173bcb" strokeWidth="1.600" />
      <path d="M260 491l-3 8h4z" fill="#173bcb" />
      <path d="M254 514l-8-9" stroke="#2d8a3a" />
      <path d="M255 514l20 2" stroke="#c43131" strokeWidth="1.300" />
      <circle cx="254.500" cy="514" r="2" fill="#ddd" />
      <g fontSize="6" fontFamily="Liberation Sans">
        <text x="259" y="492" fill="#2041d9">Z</text>
        <text x="243" y="506" fill="#2f9440">Y</text>
        <text x="276" y="519" fill="#cf3535">X</text>
      </g>

      <path d="M462 399v10l2-2 2 4 2-1-2-4h3z" fill="#fff" stroke="#222" strokeWidth=".4" />
    </svg>
  );
}

const dialogTabs: [string, string][] = [
  ['文件', 'w-[30px]'],
  ['操作', 'w-[29px]'],
  ['模型', 'w-[30px]'],
  ['NC 程序', 'w-[35px]'],
  ['G代码偏置', 'w-[41px]'],
  ['优化', 'w-[29px]'],
];

const btn = 'border border-[#b5b5b5] bg-[#f2f2f2] whitespace-nowrap';

function VericutDialog() {
  return (
    <section role="dialog" aria-label="VERICUT 接口" className="absolute top-[78px] left-[112px] flex w-[218px] flex-col border-r border-b border-[#bbb] bg-[#efefef] text-[7px] text-[#222]">
      <header className="flex h-[13px] items-center bg-[#529fb6] px-1 text-white">
        <Settings size={9} strokeWidth={2.5} />
        <h2 className="flex-1 pl-1 text-[8px]">VERICUT 接口 9.0.3 (8.0)</h2>
        <button aria-label="帮助" className="w-3 text-[9px] font-bold">?</button>
        <button aria-label="关闭" className="flex w-[13px] justify-center">
          <svg viewBox="0 0 6 6" className="size-[6px]" stroke="#fff" strokeWidth="1.200"><path d="M0 0l6 6M6 0L0 6" /></svg>
        </button>
      </header>
      <div className="px-[6px] pt-1 pb-[6px]">
        <div role="tablist" className="flex h-[17px] items-end pl-px">
          {dialogTabs.map(([label, w]) => (
            <button
              key={label}
              role="tab"
              className={clsx('whitespace-nowrap border border-b-0 border-[#d0d0d0]', w, label === '模型' ? 'h-[17px] bg-white' : 'h-[15px] bg-[#f0f0f0]')}
            >
              {label}
            </button>
          ))}
        </div>
        <div className="flex h-[180px] flex-col border border-[#c5c5c5] bg-white px-[3px]">
          <h3 className="pt-[5px] text-center">几何</h3>
          <div className="mx-auto mt-[5px] flex h-[23px] w-[84px] items-center border-r border-b border-[#e0e0e0] pl-[2px]">
            <button aria-label="坐标系" className="flex h-[19px] w-[19px] items-center justify-center bg-[#92c6d4]">
              <Icon name="csys" className="size-[14px]" />
            </button>
            <button aria-label="部件" className="flex w-[22px] justify-center"><Icon name="cards" className="size-[13px]" /></button>
            <button aria-label="毛坯" className="flex w-[19px] justify-center"><Icon name="blank" className="size-[14px]" /></button>
            <button aria-label="夹具" className="flex w-[22px] justify-center"><Icon name="redPart" className="size-[14px]" /></button>
          </div>
          <div className="mt-[5px] mr-px flex gap-px">
            <button disabled className="h-[17px] flex-1 border border-[#d0d0d0] text-[#aaa]">选择</button>
            <button className="h-[17px] flex-1 border border-[#aaa]">重新选择</button>
            <button className="h-[17px] flex-1 border border-[#aaa]">移除</button>
          </div>
          <label className="mt-1 flex items-center gap-[3px] text-[#aaa]">
            <input type="checkbox" disabled className="size-2 appearance-none border border-[#ccc] bg-white" />
            为SOR文件选择线架和网面
          </label>
        </div>
        <p className="pt-[3px]">当前程序组设置: DZ-1</p>
        <div className="mt-[7px] flex h-[22px] justify-center border-b border-[#d0d0d0]">
          <button className={clsx(btn, 'h-[17px] w-7')}>选项</button>
        </div>
        <div className="mt-[5px] mr-px flex">
          <button className={clsx(btn, 'h-4 flex-1')}>Run VERICUT</button>
          <button className={clsx(btn, 'h-4 flex-1')}>输出文件</button>
          <button className={clsx(btn, 'h-4 flex-1')}>Output and Run</button>
        </div>
        <div className="mt-[8px] flex justify-end gap-[3px] pr-px">
          <button className="h-[14px] w-[31px] bg-[#6fb2c5] text-white">确定</button>
          <button className="h-[14px] w-[31px] border border-[#c5c5c5] bg-[#dcdcdc]">应用</button>
          <button className="h-[14px] w-[31px] border border-[#c5c5c5] bg-[#dcdcdc]">取消</button>
        </div>
      </div>
    </section>
  );
}

export default function App() {
  return (
    <div className="relative flex h-screen overflow-hidden bg-white font-['Open_Sans','Noto_Sans_CJK_SC',sans-serif] leading-none">
      <div className="w-[3px] shrink-0 border-r border-[#e0e0e0] bg-[#777]" />
      <div className="flex min-w-0 flex-1 flex-col">
        <MenuBar />
        <TabBar />
        <Ribbon />
        <ToolStrip />
        <main className="flex min-h-0 flex-1">
          <SideBar />
          <Navigator />
          <div className="flex w-[21px] shrink-0 flex-col justify-end border-l border-[#bbb] bg-white pb-[2px] pl-1 text-[6px]">
            ◂
          </div>
          <div className="flex min-w-0 flex-1 flex-col">
            <div className="flex h-[14px] items-center border-b border-[#3e7f96] bg-white">
              <div className="flex h-full w-[127px] items-center justify-end gap-1 bg-[#529fb6] pr-1 text-[8px] text-white">
                <Square size={6} strokeWidth={4} />
                <button aria-label="关闭标签">×</button>
              </div>
            </div>
            <div className="relative min-h-0 flex-1 bg-black">
              <Model />
              <div className="absolute top-0 right-0 h-[30px] w-[5px] bg-[#25283a] pt-[17px] pl-[2px]">
                <div className="h-[10px] bg-[#4d8b6a]" />
              </div>
            </div>
          </div>
        </main>
        <footer className="flex h-[13px] shrink-0 items-center border-t border-[#999] bg-white pr-4 pl-5 text-[6px] text-[#222]">
          <span className="flex-1 text-center">坐标系</span>
          <Maximize size={8} />
        </footer>
      </div>
      <VericutDialog />
    </div>
  );
}
